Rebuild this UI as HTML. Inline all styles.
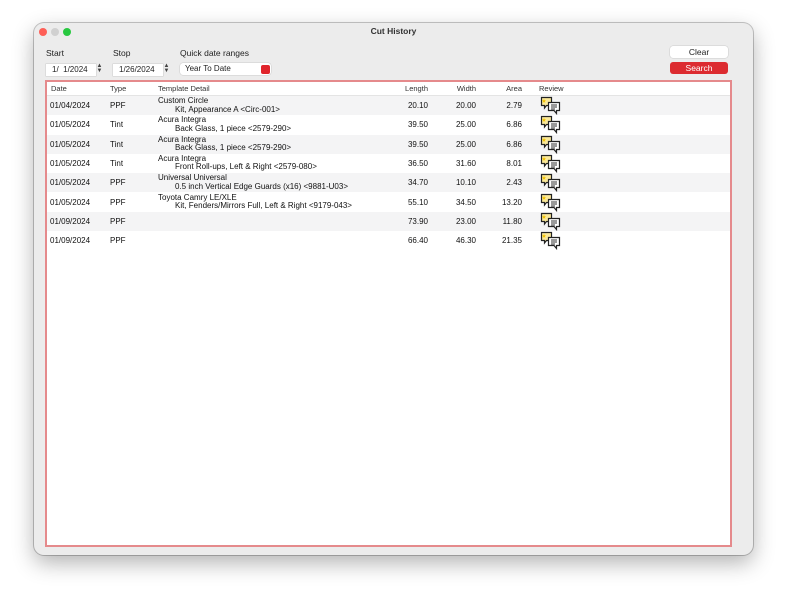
<!DOCTYPE html>
<html><head><style>
body{margin:0;width:787px;height:600px;background:#fff;font-family:"Liberation Sans",sans-serif;position:relative;overflow:hidden}
.win{position:absolute;left:34px;top:23px;width:719px;height:532px;background:#ececec;border-radius:10px;box-shadow:0 8px 22px rgba(0,0,0,.3),0 0 0 1px #c8c8c8}
.tb{position:absolute;left:0;top:0;width:100%;height:17px;text-align:center;font-size:8.5px;font-weight:bold;color:#333;line-height:17px}
.dot{position:absolute;top:5px;width:8px;height:8px;border-radius:50%}
.a{position:absolute;font-size:8.5px;color:#222}
.fld{position:absolute;background:#fff;height:12px;font-size:8px;line-height:12px;color:#222;box-shadow:0 0 0 .5px #ccc}
.btn{position:absolute;left:636px;width:58px;height:12px;border-radius:3px;font-size:8.5px;text-align:center;line-height:12px}
.tbl{position:absolute;left:11px;top:57px;width:683px;height:463px;background:#fff;border:2px solid #e58a8c}
.hd{position:absolute;top:2px;font-size:7.5px;color:#333}
.row{position:absolute;left:0;width:683px;height:19px;font-size:8px;color:#111}
.row span{position:absolute}
.r{text-align:right}
.st{position:absolute;width:7px;height:12px;font-size:6px;line-height:5px;color:#444;text-align:center}
</style></head><body>
<div class="win">
<div class="tb">Cut History</div>
<div class="dot" style="left:5px;background:#fe5f57"></div>
<div class="dot" style="left:17px;background:#d0d0d0"></div>
<div class="dot" style="left:29px;background:#28c840"></div>
<div class="a" style="left:12px;top:25px">Start</div>
<div class="a" style="left:79px;top:25px">Stop</div>
<div class="a" style="left:146px;top:25px">Quick date ranges</div>
<div class="fld" style="left:12px;top:41px;width:44px;padding-left:6px">1/ &nbsp;1/2024</div>
<div class="st" style="left:62px;top:41px">▲<br>▼</div>
<div class="fld" style="left:79px;top:41px;width:44px;padding-left:6px">1/26/2024</div>
<div class="st" style="left:129px;top:41px">▲<br>▼</div>
<div class="fld" style="left:146px;top:40px;width:86px;padding-left:5px;border-radius:3px">Year To Date</div>
<div style="position:absolute;left:227px;top:42px;width:9px;height:9px;background:#e0242b;border-radius:2px"></div>
<div class="btn" style="top:23px;background:#fff;color:#222;box-shadow:0 0 0 .5px #ccc">Clear</div>
<div class="btn" style="top:39px;background:#dc2b30;color:#fff">Search</div>
<div class="tbl">
<div style="position:absolute;left:0;top:0;width:683px;height:13px;border-bottom:1px solid #e4e4e4"></div>
<div class="hd" style="left:4px">Date</div><div class="hd" style="left:63px">Type</div><div class="hd" style="left:111px">Template Detail</div>
<div class="hd" style="left:339px;width:42px;text-align:right">Length</div><div class="hd" style="left:389px;width:40px;text-align:right">Width</div><div class="hd" style="left:435px;width:40px;text-align:right">Area</div><div class="hd" style="left:492px">Review</div>
<div id="rows"></div>
</div>
</div>
<script>
const d=[["01/04/2024","PPF","Custom Circle","Kit, Appearance A <Circ-001>","20.10","20.00","2.79"],
["01/05/2024","Tint","Acura Integra","Back Glass, 1 piece <2579-290>","39.50","25.00","6.86"],
["01/05/2024","Tint","Acura Integra","Back Glass, 1 piece <2579-290>","39.50","25.00","6.86"],
["01/05/2024","Tint","Acura Integra","Front Roll-ups, Left & Right <2579-080>","36.50","31.60","8.01"],
["01/05/2024","PPF","Universal Universal","0.5 inch Vertical Edge Guards (x16) <9881-U03>","34.70","10.10","2.43"],
["01/05/2024","PPF","Toyota Camry LE/XLE","Kit, Fenders/Mirrors Full, Left & Right <9179-043>","55.10","34.50","13.20"],
["01/09/2024","PPF","","","73.90","23.00","11.80"],
["01/09/2024","PPF","","","66.40","46.30","21.35"]];
const ic='<svg width="22" height="19" viewBox="0 0 22 19"><path d="M1.5 1.5h10v8h-5l-2 2.5v-2.5h-3z" fill="#fbe99a" stroke="#222" stroke-width="1.2"/><path d="M4 3l.6 1.3 1.4.1-1 .9.3 1.4-1.3-.7-1.3.7.3-1.4-1-.9 1.4-.1z" fill="#f2c200"/><path d="M8.5 6.5h11v8h-3v3l-2.5-3h-5.5z" fill="#fff" stroke="#222" stroke-width="1.2"/><path d="M11 9h6M11 11h6M11 13h4" stroke="#333"/></svg>';
let h='';const esc=s=>s.replace(/&/g,'&amp;').replace(/</g,'&lt;').replace(/>/g,'&gt;');
d.forEach((r,i)=>{const t=14+i*19.3;h+=`<div class="row" style="top:${t}px;background:${i%2?'#fff':'#f4f4f5'}">
<span style="left:3px;top:5px">${r[0]}</span><span style="left:63px;top:5px">${r[1]}</span>
<span style="left:111px;top:1px;line-height:8.5px">${esc(r[2])}<br><span style="position:static;padding-left:17px">${esc(r[3])}</span></span>
<span class="r" style="left:339px;width:42px;top:5px">${r[4]}</span><span class="r" style="left:389px;width:40px;top:5px">${r[5]}</span><span class="r" style="left:435px;width:40px;top:5px">${r[6]}</span>
<span style="left:493px;top:0">${ic}</span></div>`});
document.getElementById('rows').innerHTML=h;
</script>
</body></html>
